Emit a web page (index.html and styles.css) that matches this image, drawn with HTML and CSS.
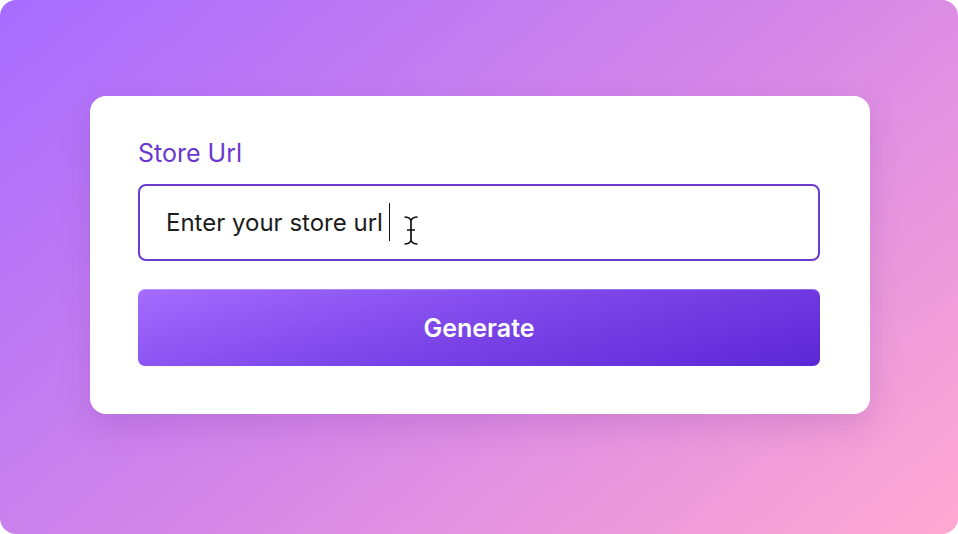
FILE: index.html
```html
<!DOCTYPE html>
<html lang="en">
<head>
<meta charset="utf-8">
<title>Store Url</title>
<link rel="stylesheet" href="styles.css">
</head>
<body>
<div class="page">
  <div class="card">
    <label class="label">Store Url</label>
    <div class="field">
      <span class="value">Enter your store url</span>
      <span class="caret"></span>
      <svg class="ibeam" width="16" height="31" viewBox="0 0 16 31" aria-hidden="true">
        <path d="M1.5 2 C5 2 7 3 8 5.5 C9 3 11 2 14.5 2 M8 5.5 L8 25.5 M4 15 L12 15 M1.5 29 C5 29 7 28 8 25.5 C9 28 11 29 14.5 29" fill="none" stroke="#111" stroke-width="1.7"/>
      </svg>
    </div>
    <button class="btn">Generate</button>
  </div>
</div>
</body>
</html>
```
FILE: styles.css
```css
html, body {
  margin: 0;
  padding: 0;
  background: #ffffff;
}
body {
  font-family: Inter, "Noto Sans", sans-serif;
}
.page {
  width: 958px;
  height: 534px;
  border-radius: 16px;
  overflow: hidden;
  background: linear-gradient(140deg, #a66cff 0%, #d386e8 50%, #ffa9d1 100%);
  box-sizing: border-box;
  padding: 96px 0 0 90px;
  display: flex;
  flex-direction: column;
  align-items: flex-start;
}
.card {
  width: 780px;
  height: 318px;
  box-sizing: border-box;
  background: #ffffff;
  border-radius: 16px;
  padding: 42px 50px 0 48px;
  display: flex;
  flex-direction: column;
  box-shadow: 0 12px 30px rgba(110, 40, 150, 0.18);
}
.label {
  font-size: 25px;
  line-height: 30px;
  color: #6a38cf;
  margin-bottom: 16px;
}
.field {
  height: 77px;
  box-sizing: border-box;
  border: 2px solid #6a3bd0;
  border-radius: 8px;
  padding-left: 26px;
  display: flex;
  align-items: center;
}
.value {
  font-size: 24px;
  color: #1c1c1c;
}
.caret {
  width: 1.5px;
  height: 38px;
  background: #111;
  margin-left: 6px;
  margin-top: -1px;
}
.ibeam {
  margin-left: 13px;
  margin-top: 16px;
}
.btn {
  margin-top: 28px;
  height: 77px;
  border: none;
  border-radius: 7px;
  background: linear-gradient(165deg, #a56cff 0%, #7c45e8 50%, #5b27d6 100%);
  box-shadow: inset 0 1px 0 rgba(255,255,255,0.25);
  color: #ffffff;
  font-family: Inter, "Noto Sans", sans-serif;
  font-size: 25px;
  font-weight: 600;
  padding: 0;
}
```
